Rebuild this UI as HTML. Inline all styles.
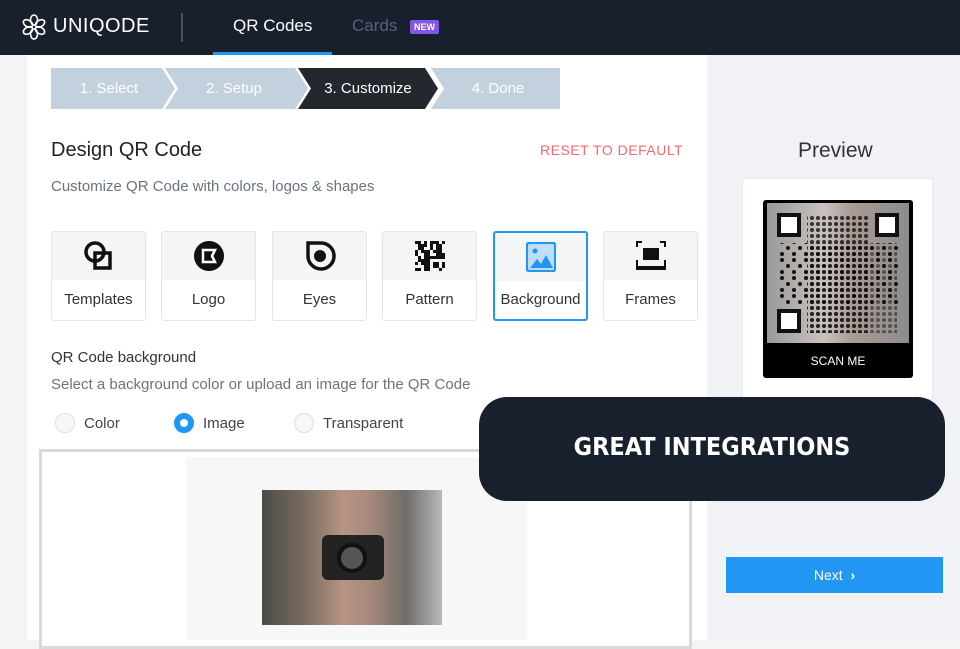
<!DOCTYPE html>
<html><head><meta charset="utf-8"><style>
*{margin:0;padding:0;box-sizing:border-box}
body{width:960px;height:640px;overflow:hidden;position:relative;background:#f3f4f6;font-family:"Liberation Sans",sans-serif;color:#2b2f36}
.hdr{position:absolute;left:0;top:0;width:960px;height:55px;background:#18202d}
.abs{position:absolute}
.main{position:absolute;left:27px;top:55px;width:680px;height:585px;background:#fff}
.right{position:absolute;left:707px;top:55px;width:253px;height:585px;background:#f0f2f5}
.step{position:absolute;top:68px;height:41px;color:#fff;font-size:15px;line-height:41px;text-align:center}
.card{position:absolute;top:231px;width:95px;height:90px;border:1px solid #e3e5e8;border-radius:3px;background:#fff;overflow:hidden}
.card .top{height:48px;background:#f4f5f7;display:flex;align-items:center;justify-content:center}
.card .lbl{text-align:center;font-size:15px;line-height:40px;color:#333}
.radio{position:absolute;top:413px;width:20px;height:20px;border-radius:50%;border:1px solid #dde0e4;background:#f6f7f8}
.rl{position:absolute;top:415px;font-size:15px;color:#444}
</style></head><body>
<div class="hdr">
 <svg class="abs" style="left:22px;top:14px" width="24" height="26" viewBox="0 0 24 26" fill="none" stroke="#fff" stroke-width="1.6"><ellipse cx="12" cy="6" rx="3.5" ry="5"/><ellipse cx="12" cy="20" rx="3.5" ry="5"/><ellipse cx="6" cy="9.5" rx="5" ry="3.3" transform="rotate(30 6 9.5)"/><ellipse cx="18" cy="9.5" rx="5" ry="3.3" transform="rotate(-30 18 9.5)"/><ellipse cx="6" cy="16.5" rx="5" ry="3.3" transform="rotate(-30 6 16.5)"/><ellipse cx="18" cy="16.5" rx="5" ry="3.3" transform="rotate(30 18 16.5)"/></svg>
 <div class="abs" style="left:53px;top:15px;color:#fff;font-size:20px;letter-spacing:0.5px">UNIQODE</div>
 <div class="abs" style="left:181px;top:13px;width:2px;height:29px;background:#4a5260"></div>
 <div class="abs" style="left:233px;top:16px;color:#fff;font-size:17px">QR Codes</div>
 <div class="abs" style="left:213px;top:52px;width:119px;height:3px;background:#2196f3"></div>
 <div class="abs" style="left:352px;top:16px;color:#5a6373;font-size:17px">Cards</div>
 <div class="abs" style="left:410px;top:20px;background:#8357e5;color:#fff;font-size:9px;font-weight:bold;padding:2px 4px;border-radius:2px">NEW</div>
</div>
<div class="main"></div>
<div class="right"></div>
<svg class="abs" style="left:51px;top:68px" width="510" height="41">
 <polygon points="0,0 111,0 124,20.5 111,41 0,41" fill="#c3d1de"/>
 <polygon points="114,0 244,0 257,20.5 244,41 114,41 127,20.5" fill="#c3d1de"/>
 <polygon points="247,0 374,0 387,20.5 374,41 247,41 260,20.5" fill="#22282e"/>
 <polygon points="380,0 509,0 509,41 380,41 393,20.5" fill="#c3d1de"/>
</svg>
<div class="step" style="left:51px;width:116px">1. Select</div>
<div class="step" style="left:176px;width:116px">2. Setup</div>
<div class="step" style="left:310px;width:116px">3. Customize</div>
<div class="step" style="left:440px;width:116px">4. Done</div>
<div class="abs" style="left:51px;top:139px;font-size:20px;color:#222">Design QR Code</div>
<div class="abs" style="left:540px;top:142px;font-size:14px;color:#ef6b6b;letter-spacing:0.5px">RESET TO DEFAULT</div>
<div class="abs" style="left:51px;top:178px;font-size:15px;color:#6b7380">Customize QR Code with colors, logos &amp; shapes</div>
<div class="card" style="left:51px"><div class="top"><svg width="32" height="32" viewBox="0 0 32 32" fill="none" stroke="#111" stroke-width="3.5"><circle cx="12" cy="12" r="9"/><rect x="12" y="13" width="15" height="15"/></svg></div><div class="lbl">Templates</div></div>
<div class="card" style="left:161px"><div class="top"><svg width="32" height="32" viewBox="0 0 32 32"><circle cx="16" cy="16" r="15" fill="#111"/><path d="M10 10h12l-3 6 3 6H10z" fill="none" stroke="#fff" stroke-width="2.5"/></svg></div><div class="lbl">Logo</div></div>
<div class="card" style="left:272px"><div class="top"><svg width="32" height="32" viewBox="0 0 32 32"><path d="M4 3h12a13 13 0 1 1-12 13z" fill="none" stroke="#111" stroke-width="3.5"/><circle cx="16" cy="16" r="6" fill="#111"/></svg></div><div class="lbl">Eyes</div></div>
<div class="card" style="left:382px"><div class="top"><svg width="30" height="30" viewBox="0 0 10 10" fill="#111"><path d="M0 0h2v1H0zM3 0h1v2H3zM5 0h3v1H5zM9 0h1v1H9zM1 1h2v2H1zM5 1h1v2H5zM7 1h2v2H7zM0 3h1v2H0zM2 3h3v1H2zM6 3h3v1H6zM3 4h2v2H3zM7 4h3v2H7zM1 5h1v2H1zM5 5h2v1H5zM0 7h1v1H0zM2 6h3v2H2zM6 7h2v2H6zM9 7h1v2H9zM0 9h2v1H0zM3 8h2v2H3zM8 9h1v1H8z"/></svg></div><div class="lbl">Pattern</div></div>
<div class="card" style="left:493px;border:2px solid #2196f3"><div class="top"><svg width="30" height="30" viewBox="0 0 30 30"><rect x="1" y="1" width="28" height="28" rx="2" fill="none" stroke="#2196f3" stroke-width="2.5"/><circle cx="9" cy="9" r="2.5" fill="#2196f3"/><path d="M4 26l7-9 4 5 5-9 7 13z" fill="#2196f3"/><rect x="3" y="3" width="24" height="24" fill="#2196f3" opacity=".25"/></svg></div><div class="lbl" style="line-height:38px">Background</div></div>
<div class="card" style="left:603px"><div class="top"><svg width="32" height="32" viewBox="0 0 32 32" fill="#111"><path d="M1 1h6v2H3v4H1zM25 1h6v6h-2V3h-4zM8 8h16v12H8z"/><path d="M1 20h2v6h26v-6h2v10H1z"/></svg></div><div class="lbl">Frames</div></div>
<div class="abs" style="left:51px;top:349px;font-size:15px;color:#333">QR Code background</div>
<div class="abs" style="left:51px;top:376px;font-size:15px;color:#6b7380">Select a background color or upload an image for the QR Code</div>
<div class="radio" style="left:55px"></div><div class="rl" style="left:84px">Color</div>
<div class="radio" style="left:174px;border:6px solid #2196f3;background:#fff"></div><div class="rl" style="left:203px">Image</div>
<div class="radio" style="left:294px"></div><div class="rl" style="left:323px">Transparent</div>
<div class="abs" style="left:39px;top:449px;width:653px;height:200px;border:3px solid #d9d9d9;background:#fff"></div>
<div class="abs" style="left:186px;top:457px;width:341px;height:183px;background:#f7f7f7"></div>
<div class="abs" style="left:262px;top:490px;width:180px;height:135px;background:linear-gradient(90deg,#4d4b48 0%,#7a6e62 25%,#b79583 45%,#a58a7a 60%,#6f6c6a 80%,#b7b9bb 100%)"></div>
<div class="abs" style="left:322px;top:535px;width:62px;height:45px;border-radius:6px;background:#222"></div>
<div class="abs" style="left:337px;top:543px;width:30px;height:30px;border-radius:50%;background:#555;border:4px solid #111"></div>
<div class="abs" style="left:798px;top:139px;font-size:21px;color:#333">Preview</div>
<div class="abs" style="left:742px;top:178px;width:191px;height:222px;background:#fff;border:1px solid #e6e8eb"></div>
<div class="abs" style="left:763px;top:200px;width:150px;height:178px;background:#000;border-radius:3px"></div>
<div class="abs" style="left:767px;top:203px;width:142px;height:140px;background:linear-gradient(90deg,#9a9a9a,#c9c2be 40%,#a99a94 60%,#8d8c8c)"></div>
<svg class="abs" style="left:767px;top:203px" width="142" height="140"><defs><pattern id="d" width="6" height="6" patternUnits="userSpaceOnUse"><circle cx="3" cy="3" r="2" fill="#111"/></pattern><pattern id="e" width="12" height="18" patternUnits="userSpaceOnUse"><circle cx="3" cy="3" r="2" fill="#111"/><circle cx="9" cy="9" r="2" fill="#111"/><circle cx="3" cy="15" r="2" fill="#111"/></pattern></defs>
<rect x="40" y="12" width="62" height="118" fill="url(#d)" opacity=".8"/><rect x="12" y="40" width="120" height="62" fill="url(#e)"/><rect x="40" y="40" width="90" height="90" fill="url(#d)" opacity=".5"/>
<g fill="#fff" stroke="#111" stroke-width="4"><rect x="12" y="12" width="20" height="20"/><rect x="110" y="12" width="20" height="20"/><rect x="12" y="108" width="20" height="20"/></g></svg>
<div class="abs" style="left:763px;top:354px;width:150px;text-align:center;color:#fff;font-size:12px">SCAN ME</div>
<div class="abs" style="left:479px;top:397px;width:466px;height:104px;background:#18202d;border-radius:28px;color:#fff;font-size:25px;font-weight:bold;letter-spacing:0;text-align:center;line-height:100px;font-family:'DejaVu Sans Condensed','Liberation Sans',sans-serif">GREAT INTEGRATIONS</div>
<div class="abs" style="left:726px;top:557px;width:217px;height:36px;background:#2196f3;color:#fff;font-size:14px;text-align:center;line-height:36px">Next &nbsp;<b>›</b></div>
</body></html>
